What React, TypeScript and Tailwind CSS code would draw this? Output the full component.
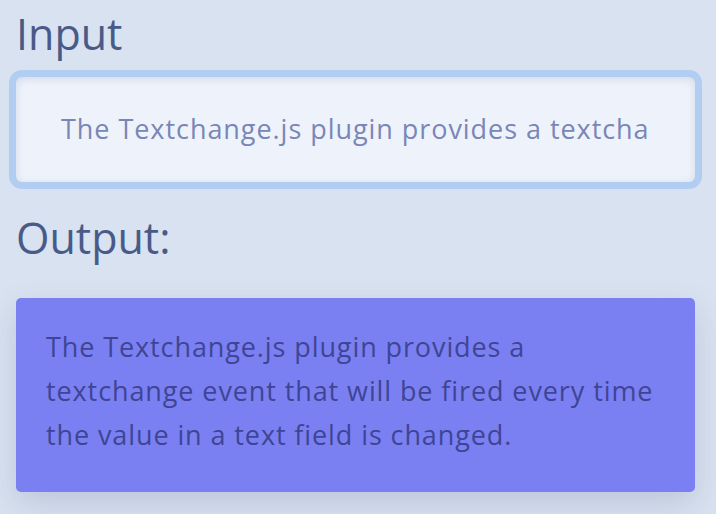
export default function App() {
  return (
    <div
      className="min-h-[514px] w-full bg-[#d9e2f0] pl-4 pr-[21px] pt-[4px]"
      style={{ fontFamily: "'Open Sans', Lato, sans-serif" }}
    >
      <h2 className="text-[43px] font-normal leading-[60px] text-[#4a5a88]">Input</h2>
      <div className="mt-[13px] flex h-[105px] items-center overflow-hidden whitespace-nowrap rounded-[6px] bg-[#eef3fb] px-[45px] text-[27px] tracking-[0.95px] text-[#7a86b6] shadow-[inset_0_2px_8px_rgba(80,100,140,0.18)] ring-[7px] ring-[#b2cdf2]">
        The Textchange.js plugin provides a textcha
      </div>
      <h2 className="mt-[26px] text-[43px] font-normal leading-[60px] text-[#4a5a88]">Output:</h2>
      <div className="mt-[30px] h-[194px] rounded-[5px] bg-[#7a80f2] py-[27px] pl-[30px] pr-[33px] text-[27px] leading-[44px] tracking-[0.9px] text-[#3f4594] shadow-[0_12px_32px_rgba(60,80,120,0.18)]">
        The Textchange.js plugin provides a textchange event that will be fired every time the value in a text field is changed.
      </div>
    </div>
  );
}
